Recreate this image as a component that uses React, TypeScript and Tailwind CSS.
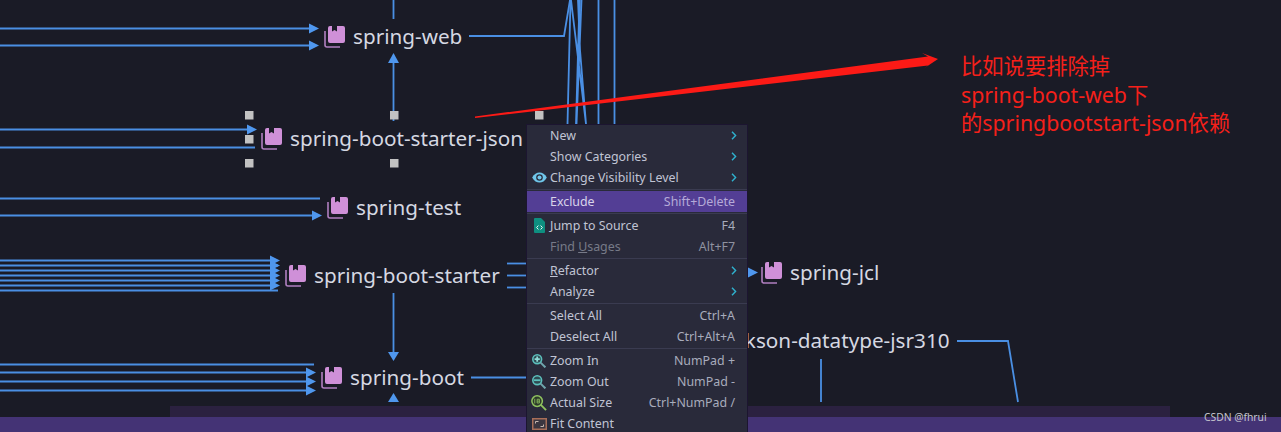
import React from 'react';

const sans = 'font-["Noto_Sans","Noto_Sans_CJK_SC",sans-serif]';

// Diagram nodes, placed on the free canvas
const nodes = [
  { label: 'spring-web', icon: 'left-[324px] top-[26px]', text: 'left-[353px] top-[21px]' },
  { label: 'spring-boot-starter-json', icon: 'left-[261px] top-[128px]', text: 'left-[290px] top-[123px]' },
  { label: 'spring-test', icon: 'left-[327px] top-[197px]', text: 'left-[356px] top-[192px]' },
  { label: 'spring-boot-starter', icon: 'left-[285px] top-[265px]', text: 'left-[314px] top-[260px]' },
  { label: 'spring-jcl', icon: 'left-[761px] top-[262px]', text: 'left-[790px] top-[257px]' },
  { label: 'spring-boot', icon: 'left-[321px] top-[367px]', text: 'left-[350px] top-[362px]' },
  { label: 'jackson-datatype-jsr310', icon: 'left-[690px] top-[331px]', text: 'left-[718px] top-[325px]' },
];

const PackageIcon = ({ className }: { className: string }) => (
  <svg className={`absolute ${className}`} width="21" height="22" viewBox="0 0 21 22">
    <path d="M1 5v14a2 2 0 0 0 2 2h13" fill="none" stroke="#b07fc0" strokeWidth="1.6" />
    <path
      d="M6 0h2v5.5L10.5 4 13 5.5V0h6a2 2 0 0 1 2 2v13a2 2 0 0 1-2 2H6a2 2 0 0 1-2-2V2a2 2 0 0 1 2-2z"
      fill="#cf90d8"
    />
  </svg>
);

const Arrow = ({ x, y }: { x: number; y: number }) => (
  <polygon points={`${x},${y - 5} ${x + 10},${y} ${x},${y + 5}`} fill="#4f97ee" />
);

const Graph = () => {
  const hLines: [number, number, number][] = [
    [0, 309, 28.5], [0, 309, 45.5],
    [0, 247, 129.5], [0, 255, 147.5],
    [0, 320, 198.5], [0, 312, 215.5],
    [0, 270, 260.5], [0, 278, 265.5], [0, 270, 270.5], [0, 270, 275.5], [0, 270, 280.5], [0, 270, 285.5], [0, 278, 290.5],
    [0, 314, 364.5], [0, 306, 372.5], [0, 306, 381.5], [0, 306, 390.5],
    [507, 526, 263.5], [507, 526, 275.5], [507, 526, 287.5],
    [471, 526, 377.5],
  ];
  const arrows = [
    [309, 28.5], [309, 45.5], [247, 129.5], [312, 215.5],
    [270, 260.5], [270, 265.5], [270, 270.5], [270, 275.5], [270, 280.5], [270, 285.5],
    [306, 372.5], [306, 381.5], [306, 390.5], [748, 272.5],
  ];
  const handles = [
    [245, 111], [390, 111], [535, 111],
    [245, 135],
    [245, 159], [390, 159],
  ];

  return (
    <svg className="absolute left-0 top-0" width="1281" height="406" viewBox="0 0 1281 406">
      <g fill="none" stroke="#4a8fe3" strokeWidth="1.8">
        {hLines.map(([a, b, y], i) => (
          <line key={i} x1={a} x2={b} y1={y} y2={y} />
        ))}
        <path d="M393.5 0V19M393.5 60V121M393.5 293V353" />
        <path d="M469 36H564L570 0" />
        <path d="M570.5 0L567.5 124M579.5 0L576 124M581.5 0L576.5 124M571 0L586 124M578 0L580 50L586 124" />
        <path d="M598.5 0V124M614.5 0V124" />
        <path d="M957 341H1008L1018 402M821 359V402" />
      </g>
      {arrows.map(([x, y], i) => (
        <Arrow key={i} x={x} y={y} />
      ))}
      <polygon points="388,63 393.5,53 399,63" fill="#4f97ee" />
      <polygon points="388,352 399,352 393.5,361" fill="#4f97ee" />
      <polygon points="388,402 399,402 393.5,393" fill="#4f97ee" />
      {handles.map(([x, y], i) => (
        <rect key={i} x={x} y={y} width="8.5" height="8.5" fill="#c2c2c2" />
      ))}
      {/* hand drawn annotation arrow */}
      <polygon points="475,116.5 928,56.5 922,53 938,59 923,69 928,65.5 475,118" fill="#fc1a16" />
    </svg>
  );
};

const EyeIcon = () => (
  <svg width="15" height="11" viewBox="0 0 16 12">
    <path d="M0 6C2 2 5 .5 8 .5S14 2 16 6c-2 4-5 5.5-8 5.5S2 10 0 6z" fill="#6fc6ea" />
    <circle cx="8" cy="6" r="3.6" fill="#292a3a" />
    <circle cx="8" cy="6" r="2.2" fill="#6fc6ea" />
  </svg>
);

const FileIcon = () => (
  <svg width="11" height="15" viewBox="0 0 11 15">
    <path d="M1 0h6l4 4v10a1 1 0 0 1-1 1H1a1 1 0 0 1-1-1V1a1 1 0 0 1 1-1z" fill="#0e8f80" />
    <path d="M4.4 7.5L2.6 9.5l1.8 2M6.6 7.5l1.8 2-1.8 2" fill="none" stroke="#e5f3f1" strokeWidth="1" />
  </svg>
);

const ZoomIcon = ({ sign }: { sign: 'plus' | 'minus' }) => (
  <svg width="14" height="14" viewBox="0 0 14 14">
    <circle cx="5.2" cy="5.2" r="4.4" fill="#2f4a52" stroke="#5cc0bc" strokeWidth="1.6" />
    <path d={sign === 'plus' ? 'M2.6 5.2h5.2M5.2 2.6v5.2' : 'M2 5.2h6.4'} stroke={sign === 'plus' ? '#8fdcd8' : '#5cc0bc'} strokeWidth="1.8" />
    <path d="M8.6 8.6L13.4 13.4" stroke="#6fa5ad" strokeWidth="2" />
  </svg>
);

const ActualSizeIcon = () => (
  <svg width="16" height="16" viewBox="0 0 17 17">
    <circle cx="6.5" cy="6.5" r="5.6" fill="#2c3a2a" stroke="#8fc25f" strokeWidth="1.6" />
    <path d="M4 4v5M6.5 4.5h2.4v4H6.5zM6.5 6.5h2.4" fill="none" stroke="#8fc25f" strokeWidth=".9" />
    <path d="M10.5 10.5L16 16" stroke="#8fc25f" strokeWidth="2" />
  </svg>
);

const FitIcon = () => (
  <svg width="15" height="12" viewBox="0 0 15 12">
    <rect x=".75" y=".75" width="13.5" height="10.5" fill="#3b3640" stroke="#a86e58" strokeWidth="1.5" />
    <path d="M3.5 5.5V3.5h3M11.5 6.5v2h-3" fill="none" stroke="#c9b8b0" />
  </svg>
);

const Chevron = () => (
  <svg className="-mr-[2px]" width="6" height="9" viewBox="0 0 6 9">
    <path d="M1 .8L4.6 4.5 1 8.2" fill="none" stroke="#2fb2cf" strokeWidth="1.4" />
  </svg>
);

type Row = {
  label: React.ReactNode;
  shortcut?: string;
  icon?: React.ReactNode;
  submenu?: boolean;
  active?: boolean;
  disabled?: boolean;
};

const groups: Row[][] = [
  [
    { label: 'New', submenu: true },
    { label: 'Show Categories', submenu: true },
    { label: 'Change Visibility Level', submenu: true, icon: <EyeIcon /> },
  ],
  [{ label: 'Exclude', shortcut: 'Shift+Delete', active: true }],
  [
    { label: 'Jump to Source', shortcut: 'F4', icon: <FileIcon /> },
    { label: <>Find <span className="underline">U</span>sages</>, shortcut: 'Alt+F7', disabled: true },
  ],
  [
    { label: <><span className="underline">R</span>efactor</>, submenu: true },
    { label: 'Analyze', submenu: true },
  ],
  [
    { label: 'Select All', shortcut: 'Ctrl+A' },
    { label: 'Deselect All', shortcut: 'Ctrl+Alt+A' },
  ],
  [
    { label: 'Zoom In', shortcut: 'NumPad +', icon: <ZoomIcon sign="plus" /> },
    { label: 'Zoom Out', shortcut: 'NumPad -', icon: <ZoomIcon sign="minus" /> },
    { label: 'Actual Size', shortcut: 'Ctrl+NumPad /', icon: <ActualSizeIcon /> },
    { label: 'Fit Content', icon: <FitIcon /> },
  ],
];

const MenuRow = ({ row }: { row: Row }) => {
  const tone = row.active ? 'bg-[#533e95] text-[#d8d4ea]' : row.disabled ? 'text-[#777a88]' : 'text-[#c0c4d4]';
  const shortcutTone = row.active ? 'text-[#b5aad8]' : row.disabled ? 'text-[#8f92a0]' : 'text-[#a8acbc]';
  return (
    <div className={`flex h-[21px] items-center pr-[12px] text-[12.4px] ${tone}`}>
      <span className="flex w-[23px] shrink-0 items-center justify-center pl-[1px]">{row.icon}</span>
      <span className="flex-1 whitespace-nowrap pt-[2px]">{row.label}</span>
      {row.shortcut && <span className={`whitespace-nowrap pt-[2px] ${shortcutTone}`}>{row.shortcut}</span>}
      {row.submenu && <Chevron />}
    </div>
  );
};

const ContextMenu = () => (
  <div className={`absolute left-[526px] top-[124px] w-[222px] border border-[#1c1530] bg-[#292a3a] ${sans}`}>
    {groups.map((group, i) => (
      <div key={i}>
        {i > 0 && (
          <div className="flex h-[3px] items-center">
            <div className="h-px w-full bg-[#3a3b50]" />
          </div>
        )}
        {group.map((row, j) => (
          <MenuRow key={j} row={row} />
        ))}
      </div>
    ))}
  </div>
);

const App = () => {
  return (
    <div className={`relative flex h-[432px] w-[1281px] flex-col overflow-hidden bg-[#1a1b26] ${sans}`}>
      <div className="relative flex-1">
        <Graph />
        {nodes.map((n) => (
          <React.Fragment key={n.label}>
            <PackageIcon className={n.icon} />
            <span className={`absolute whitespace-nowrap text-[20.7px] leading-[30px] text-[#d5d8e2] ${n.text}`}>
              {n.label}
            </span>
          </React.Fragment>
        ))}
      </div>

      <div className="ml-[170px] h-[11px] w-[1000px] bg-[#2b2140]" />
      <div className="h-[15px] bg-[#443375]" />

      <ContextMenu />

      <div className="absolute left-[961px] top-[52px] text-[21.3px] leading-[28.5px] text-[#f5201a]">
        <p>比如说要排除掉</p>
        <p>spring-boot-web下</p>
        <p>的springbootstart-json依赖</p>
      </div>

      <span className="absolute left-[1204px] top-[410px] text-[10.3px] leading-[14px] text-[#c4c4cc]">CSDN @fhrui</span>
    </div>
  );
};

export default App;
